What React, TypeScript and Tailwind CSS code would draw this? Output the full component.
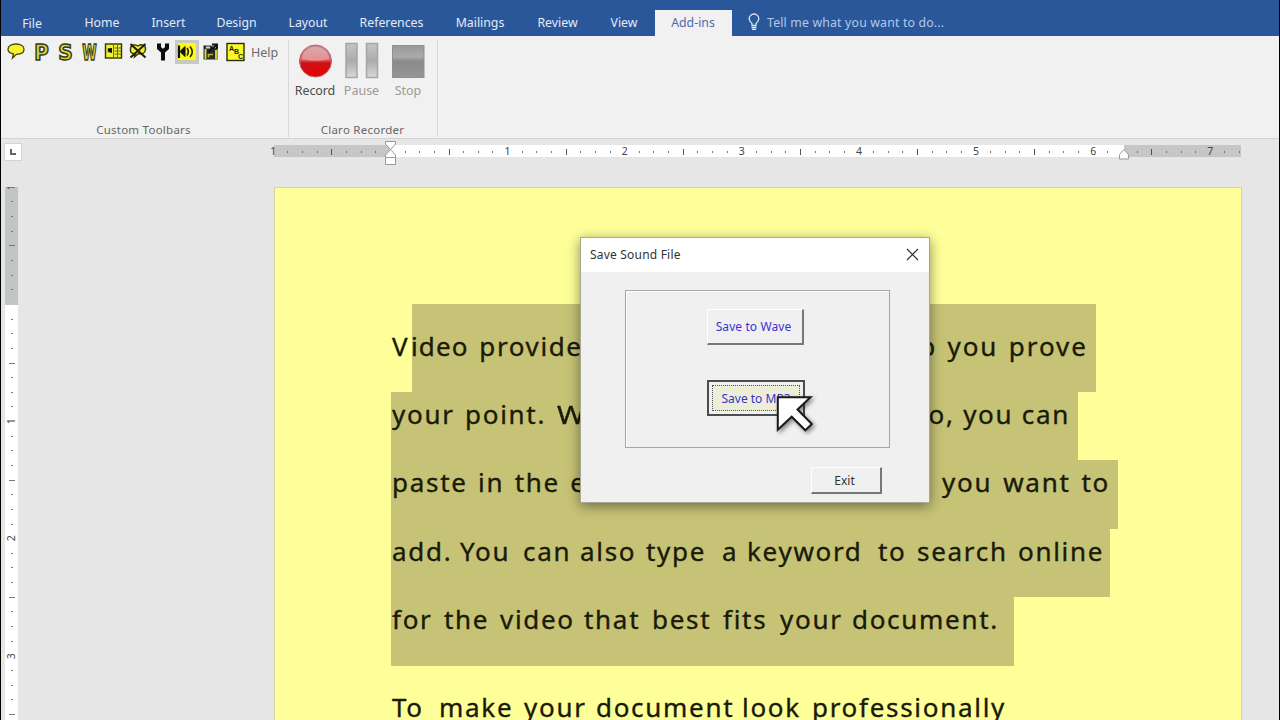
import type { ReactNode } from 'react'

const tabs = [
    { name: 'Home', width: 'w-[68px]' },
    { name: 'Insert', width: 'w-[65px]' },
    { name: 'Design', width: 'w-[71px]' },
    { name: 'Layout', width: 'w-[72px]' },
    { name: 'References', width: 'w-[95px]' },
    { name: 'Mailings', width: 'w-[82px]' },
    { name: 'Review', width: 'w-[73px]' },
    { name: 'View', width: 'w-[60px]' },
]

function Header() {
    return (
        <div className="flex h-[36px] items-end bg-[#2a579a] text-[12.3px] text-[#e4ebf6]">
            <div className="h-[25px] w-[67px] pr-[5px] text-center leading-[26px]">File</div>
            {tabs.map((tab) => (
                <div key={tab.name} className={`${tab.width} h-[26px] text-center leading-[26px]`}>{tab.name}</div>
            ))}
            <div className="ml-[1px] h-[26px] w-[77px] bg-[#f1f1f1] pr-[1px] text-center leading-[26px] text-[#4a6ba8]">Add-ins</div>
            <svg className="mb-[5px] ml-[16px] h-[18px] w-[12px]" viewBox="0 0 12 18" fill="none" stroke="#dce6f5" strokeWidth="1.3">
                <path d="M4 12.5V10.5C2.5 9.3 1.2 8 1.2 5.8A4.8 4.8 0 0 1 10.8 5.8C10.8 8 9.5 9.3 8 10.5V12.5Z" />
                <path d="M3.5 14.5H8.5M4 16.3H8" />
            </svg>
            <div className="ml-[7px] h-[26px] leading-[26px] tracking-[0.17px] text-[#b3c8e8]">Tell me what you want to do...</div>
        </div>
    )
}

function Tool({ children, active = false }: { children: ReactNode; active?: boolean }) {
    return (
        <div className={`flex h-[24px] w-[24.4px] items-center justify-center ${active ? 'bg-[#c8c8c4]' : ''}`}>
            <svg className="h-[20px] w-[20px] overflow-visible" viewBox="0 0 20 20">{children}</svg>
        </div>
    )
}

function LetterIcon({ letter }: { letter: string }) {
    return (
        <text x="10.5" y="18" textAnchor="middle" textLength="14.5" lengthAdjust="spacingAndGlyphs" fontFamily="DejaVu Sans" fontWeight="bold" fontSize="21" fill="#d4d444" stroke="#3a3a12" strokeWidth="1.5">
            {letter}
        </text>
    )
}

function Toolbar() {
    return (
        <div className="flex h-[24px] items-center pl-[3px]">
            <Tool>
                <path d="M10 2C15 2 18 4.3 18 7.3S15 12.3 10.5 12.3L6.5 16L7.5 12C3.5 11.3 2 9.3 2 7.3C2 4.3 5 2 10 2Z" fill="#f5f52a" stroke="#44440c" strokeWidth="1.3" />
            </Tool>
            <Tool><LetterIcon letter="P" /></Tool>
            <Tool><LetterIcon letter="S" /></Tool>
            <Tool><LetterIcon letter="W" /></Tool>
            <Tool>
                <rect x="1.5" y="2" width="16" height="14" fill="#f0f030" stroke="#33330a" strokeWidth="1.4" />
                <path d="M9.5 2V16M10.5 6H17M10.5 9H17M10.5 12H17M13.5 2.5V15.5" stroke="#6b6b1a" />
                <path d="M3 6H8V11H3Z" fill="#c9c930" />
                <path d="M4 6.5L8 6V11L4 9.5Z" fill="#111" />
            </Tool>
            <Tool>
                <path d="M10 4C14 1.5 18 3 17.5 7.5S14 12 10.5 11.5L6.5 15L7 11.8C3 12 2 9.5 2.5 6.5C3 2.5 6.5 2 10 4Z" fill="#f0f02a" stroke="#33330a" strokeWidth="1.4" />
                <path d="M2.5 2L17.5 15.5M17.5 2L2.5 15.5" stroke="#1c1c08" strokeWidth="1.9" />
            </Tool>
            <Tool>
                <path d="M6 1.5V6L10 9.5L14 6V1.5M10 9V18.5" fill="none" stroke="#0c0c0c" strokeWidth="4" />
            </Tool>
            <Tool active>
                <rect x="1" y="1" width="18" height="17" fill="#fbfb12" />
                <path d="M2 3.5V16" stroke="#111" strokeWidth="2.2" />
                <path d="M3 9.5L8 4.5V14.5Z" fill="#111" stroke="#111" />
                <path d="M10 6Q12.5 9.7 10 13.5M13 4.5Q17.5 9.7 13 15" fill="none" stroke="#222208" strokeWidth="1.6" />
            </Tool>
            <Tool>
                <path d="M2.5 3.5H10L16.5 7V17.5H2.5Z" fill="#2a2a2a" />
                <path d="M4.5 7V17M15 8V17" stroke="#dede3a" strokeWidth="1.8" />
                <path d="M7.5 15.5V12.5H12" fill="none" stroke="#b5b520" strokeWidth="1.6" />
                <path d="M5 5.5H9" stroke="#d6d6d6" strokeWidth="2" />
                <path d="M7.5 10.5L15.5 3M11 2.5H16V7" fill="none" stroke="#151515" strokeWidth="2" />
            </Tool>
            <Tool>
                <rect x="1" y="1.5" width="17" height="17" fill="#f9f92a" stroke="#2b2b08" strokeWidth="1.4" />
                <g fontFamily="Liberation Sans" fontWeight="bold" fontSize="7" fill="#222208">
                    <text x="3" y="8.5">A</text>
                    <text x="8" y="12">B</text>
                    <text x="12" y="16.5">C</text>
                </g>
            </Tool>
            <span className="ml-[3px] pt-[2px] text-[12.5px] text-[#6a6a6a]">Help</span>
        </div>
    )
}

function Recorder() {
    return (
        <div className="flex pt-[1px] pl-[3px] text-center text-[12.5px] text-[#9a9a9a]">
            <div className="w-[46px]">
                <svg className="mx-auto h-[38px] w-[36px]" viewBox="0 0 36 38">
                    <defs>
                        <linearGradient id="red" x1="0" y1="0" x2="0" y2="1">
                            <stop offset="0" stopColor="#c98f92" />
                            <stop offset="0.46" stopColor="#dd6468" />
                            <stop offset="0.56" stopColor="#cc1216" />
                            <stop offset="1" stopColor="#ea0000" />
                        </linearGradient>
                    </defs>
                    <circle cx="18.5" cy="20" r="16" fill="url(#red)" stroke="#b06a6d" strokeWidth="1" />
                    <path d="M5 18A13.5 12 0 0 1 32 18Q18 22 5 18Z" fill="#fff" opacity="0.28" />
                </svg>
                <div className="pt-px leading-[22px] tracking-[-0.1px] text-[#4c4c4c]">Record</div>
            </div>
            <div className="w-[47px]">
                <svg className="mx-auto h-[38px] w-[36px]" viewBox="0 0 36 38">
                    <defs>
                        <linearGradient id="bar" x1="0" y1="0" x2="0" y2="1">
                            <stop offset="0" stopColor="#c5c5c5" />
                            <stop offset="0.5" stopColor="#ababab" />
                            <stop offset="1" stopColor="#d8d8d8" />
                        </linearGradient>
                    </defs>
                    <rect x="2" y="2.5" width="11" height="34" fill="url(#bar)" stroke="#a5a5a5" strokeWidth="1.5" />
                    <rect x="22.5" y="2.5" width="11" height="34" fill="url(#bar)" stroke="#a5a5a5" strokeWidth="1.5" />
                </svg>
                <div className="pt-px leading-[22px]">Pause</div>
            </div>
            <div className="w-[46px]">
                <svg className="mx-auto h-[38px] w-[36px]" viewBox="0 0 36 38">
                    <defs>
                        <linearGradient id="stop" x1="0" y1="0" x2="0" y2="1">
                            <stop offset="0" stopColor="#999" />
                            <stop offset="0.35" stopColor="#aaa" />
                            <stop offset="0.5" stopColor="#8a8a8a" />
                            <stop offset="1" stopColor="#969696" />
                        </linearGradient>
                    </defs>
                    <rect x="2.5" y="4.5" width="31.5" height="32" fill="url(#stop)" stroke="#8f8f8f" />
                </svg>
                <div className="pt-px leading-[22px]">Stop</div>
            </div>
        </div>
    )
}

function Ribbon() {
    return (
        <div className="flex h-[103px] border-b border-[#d2d2d2] bg-[#f1f1f1] pt-[4px] pb-[1px] text-[#666]">
            <div className="flex w-[288px] flex-col justify-between border-r border-[#d8d8d8]">
                <Toolbar />
                <div className="pr-[2px] text-center text-[11.5px] leading-[15px] tracking-[0.25px]">Custom Toolbars</div>
            </div>
            <div className="flex w-[149px] flex-col justify-between border-r border-[#d8d8d8]">
                <Recorder />
                <div className="pr-[1px] text-center text-[11.5px] leading-[15px] tracking-[0.25px]">Claro Recorder</div>
            </div>
        </div>
    )
}

function Mark({ index, vertical = false }: { index: number; vertical?: boolean }) {
    // the margin starts one inch (8 marks) before zero
    if (index === 8) return null
    if (index % 8 === 0) return <span className="leading-none">{Math.abs(index / 8 - 1)}</span>
    if (index % 8 === 4) return <span className={vertical ? 'h-px w-[6px] bg-[#777]' : 'h-[6px] w-px bg-[#555]'} />
    return <span className={vertical ? 'h-px w-[2px] bg-[#777]' : 'h-[2px] w-px bg-[#777]'} />
}

function TopRuler() {
    return (
        <div className="flex h-[49px] pt-[4px] pl-[3px]">
            <div className="flex h-[18px] w-[18px] items-center justify-center border border-[#d4d4d4] bg-white">
                <span className="h-[6px] w-[6px] border-b-2 border-l-2 border-[#666]" />
            </div>
            <div className="relative mt-[2px] ml-[252px] h-[12px] w-[967px] bg-[linear-gradient(to_right,#c6c6c6_117px,#fff_117px,#fff_850px,#c6c6c6_850px)]">
                <div className="-ml-[8px] flex h-[13px] text-[10.5px] text-[#444]">
                    {Array.from({ length: 67 }, (_, i) => (
                        <div key={i} className="flex w-[14.65px] shrink-0 items-center justify-center">
                            <Mark index={i} />
                        </div>
                    ))}
                </div>
                <svg className="absolute -top-[4px] left-[110px] h-[25px] w-[13px]" viewBox="0 0 13 25" fill="#fff" stroke="#999">
                    <path d="M1.5 0.5H11.5V3L6.5 8.5L1.5 3Z" />
                    <path d="M6.5 8.5L11.5 14V16.5H1.5V14Z" />
                    <path d="M1.5 16.5H11.5V23.5H1.5Z" />
                </svg>
                <svg className="absolute top-[4px] left-[844px] h-[11px] w-[12px]" viewBox="0 0 12 11" fill="#fff" stroke="#999">
                    <path d="M6 0.5L10.5 5.5V10H1.5V5.5Z" />
                </svg>
            </div>
        </div>
    )
}

function SideRuler() {
    return (
        <div className="ml-[4px] h-[534px] w-[13px] overflow-hidden bg-[linear-gradient(to_bottom,#c2c5c5_118px,#fff_118px)]">
            <div className="-mt-[7px] flex flex-col text-[10.5px] text-[#444]">
                {Array.from({ length: 37 }, (_, i) => (
                    <div key={i} className="flex h-[14.65px] shrink-0 items-center justify-center">
                        <div className={i % 8 === 0 ? 'flex -rotate-90' : 'flex'}><Mark index={i} vertical /></div>
                    </div>
                ))}
            </div>
        </div>
    )
}

type Word = [text: string, width: string]

const keywordLine: Word[] = [
    ['add.', 'w-[68px]'],
    ['You', 'w-[63px]'],
    ['can', 'w-[57px]'],
    ['also', 'w-[66px]'],
    ['type', 'w-[76px]'],
    ['a', 'w-[25px]'],
    ['keyword', 'w-[131px]'],
    ['to', 'w-[39px]'],
    ['search', 'w-[101px]'],
    ['online', 'w-[92px]'],
]

const fitsLine: Word[] = [
    ['for', 'w-[52px]'],
    ['the', 'w-[56px]'],
    ['video', 'w-[84px]'],
    ['that', 'w-[68px]'],
    ['best', 'w-[71px]'],
    ['fits', 'w-[57px]'],
    ['your', 'w-[72px]'],
    ['document.', 'w-[162px]'],
]

const designLine: Word[] = [
    ['To', 'w-[47px]'],
    ['make', 'w-[85px]'],
    ['your', 'w-[72px]'],
    ['document', 'w-[146px]'],
    ['look', 'w-[70px]'],
    ['professionally', 'w-[210px]'],
]

function Words({ words }: { words: Word[] }) {
    return words.map(([text, width], i) => <span key={i} className={`${width} shrink-0`}>{text}</span>)
}

function Line({ children, width }: { children: ReactNode; width: string }) {
    return (
        <div className={`${width} flex h-[68.4px] bg-[#c6c376] pl-[1px]`}>{children}</div>
    )
}

function Page() {
    return (
        <div className="ml-[256px] h-[540px] w-[968px] overflow-hidden border border-[#d5d3a8] bg-[#feff99] pt-[116px] pl-[116px] font-['Noto_Sans'] text-[26px] leading-[45px] tracking-[1.7px] whitespace-pre text-[#1a1a08] [-webkit-text-stroke:0.35px_#1a1a08]">
            <div className="flex h-[88px]">
                <span className="w-[21px] pt-[20px] pl-[1px]">V</span>
                <div className="flex w-[684px] justify-between bg-[#c6c376] pt-[20px] pr-[8px]">
                    <span className="-ml-px tracking-[1.1px] [word-spacing:3px]">ideo <span className="tracking-[1.6px]">provides</span></span>
                    <span className="tracking-[2px] [word-spacing:1.5px]">help you prove</span>
                </div>
            </div>
            <Line width="w-[687px]">
                <div className="flex w-full justify-between pr-[8px]">
                    <span className="[word-spacing:2px]">your point. <span className="inline-block origin-left scale-x-115 pr-[4px]">W</span>hen</span>
                    <span>Video, you can</span>
                </div>
            </Line>
            <Line width="w-[727px]">
                <div className="flex w-full justify-between pr-[8px]">
                    <span className="[word-spacing:2px]">paste in the embed</span>
                    <span className="[word-spacing:2.5px]">video you want to</span>
                </div>
            </Line>
            <Line width="w-[719px]"><Words words={keywordLine} /></Line>
            <Line width="w-[623px]"><Words words={fitsLine} /></Line>
            <div className="mt-[19px] flex pl-[1px]"><Words words={designLine} /></div>
        </div>
    )
}

function SaveDialog() {
    return (
        <div className="absolute top-[237px] left-[579px] h-[266px] w-[350px] border border-[#a9a98f] bg-[#f0f0f0] text-[12px] shadow-[0_3px_12px_rgba(0,0,0,0.45)]">
            <div className="flex h-[34px] items-center justify-between bg-white pr-[10px] pb-[2px] pl-[9px] text-[#333]">
                <span className="pt-[2px] tracking-[0.2px]">Save Sound File</span>
                <svg className="h-[13px] w-[13px]" viewBox="0 0 13 13" stroke="#333" strokeWidth="1.2">
                    <path d="M1 1L12 12M12 1L1 12" />
                </svg>
            </div>
            <div className="mt-[18px] ml-[44px] flex h-[158px] w-[265px] flex-col border border-[#a5a5a5] pt-[18px] pl-[81px] text-[#3a32d0] shadow-[inset_1px_1px_0_#fff]">
                <button className="h-[36px] w-[97px] border-t border-r-2 border-b-2 border-l border-t-white border-r-[#777] border-b-[#777] border-l-white pt-px pr-[3px] tracking-[0.1px]">Save to Wave</button>
                <button className="mt-[35px] h-[36px] w-[98px] border-2 border-[#4a4d50] p-[3px]">
                    <span className="flex h-full items-center justify-center border border-dotted border-[#555] bg-[#eceed8] pt-px">Save to MP3</span>
                </button>
            </div>
            <button className="mt-[19px] ml-[230px] h-[27px] w-[71px] border-t border-r-2 border-b-2 border-l border-t-white border-r-[#777] border-b-[#777] border-l-white pt-px pr-[3px] text-[#333]">Exit</button>
        </div>
    )
}

function Cursor() {
    return (
        <svg className="absolute top-[390px] left-[769px] h-[50px] w-[50px] drop-shadow-[2px_2px_2px_rgba(0,0,0,0.45)]" viewBox="770 390 50 50">
            <path d="M777.8 397.3H810.5L797.5 409.5L811.8 424L805.3 430.3L791.7 416.7L777.8 429.8Z" fill="#fff" stroke="#1a1a1a" strokeWidth="2" />
        </svg>
    )
}

export default function App() {
    return (
        <div className="relative h-[720px] w-[1280px] overflow-hidden border-r border-l border-black bg-[#e6e6e6] font-['Noto_Sans','Open_Sans',sans-serif]">
            <Header />
            <Ribbon />
            <TopRuler />
            <div className="-mt-[1px] flex">
                <SideRuler />
                <Page />
            </div>
            <SaveDialog />
            <Cursor />
        </div>
    )
}
